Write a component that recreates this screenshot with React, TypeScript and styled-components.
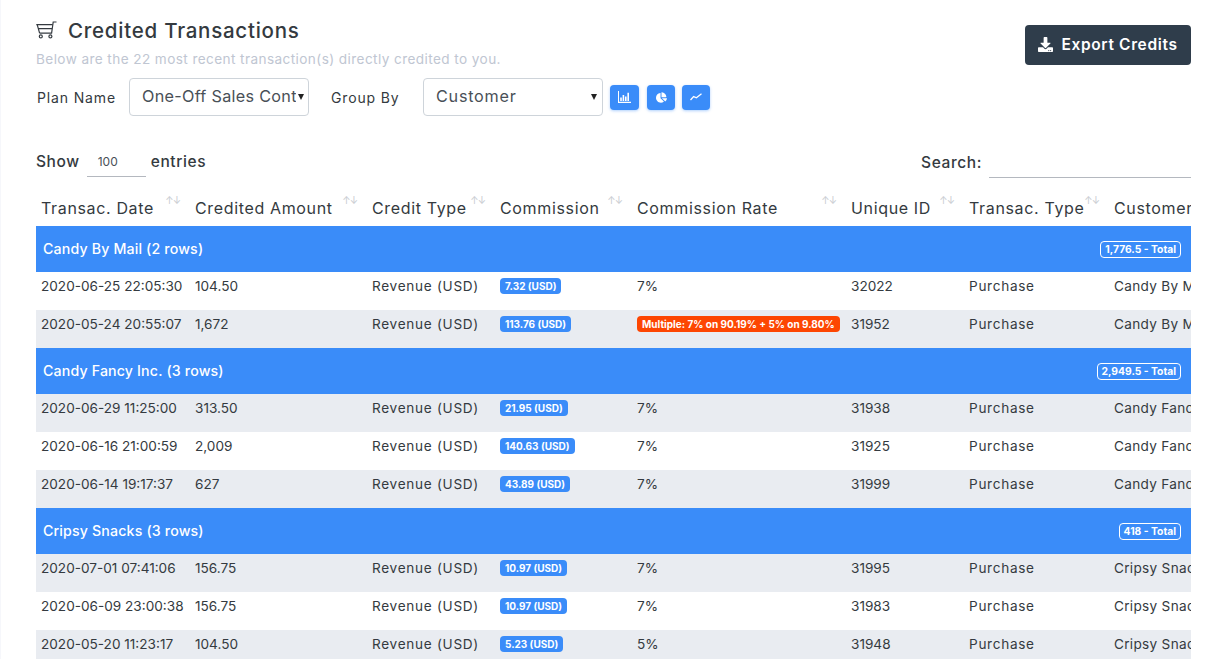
import { createGlobalStyle, styled } from 'styled-components';
import { FaChartPie, FaDownload } from 'react-icons/fa';

const FONT = `Inter, "Open Sans", "Liberation Sans", sans-serif`;

const GlobalStyle = createGlobalStyle`
  html, body {
    margin: 0;
    padding: 0;
    background: #fff;
  }
  body {
    font-family: ${FONT};
    color: #343a40;
    overflow: hidden;
  }
`;

const Page = styled.main`
  height: 659px;
  box-sizing: border-box;
  padding: 20px 23px 0 35px;
  overflow: hidden;
  border-left: 1px solid #f6f7fb;
`;

const TopRow = styled.div`
  display: flex;
  justify-content: space-between;
  align-items: flex-start;
`;

const TitleRow = styled.div`
  display: flex;
  align-items: center;
  gap: 11px;
  height: 20px;
`;

const Title = styled.h1`
  margin: 0;
  font-size: 20.5px;
  font-weight: 500;
  color: #343a40;
  letter-spacing: 0.75px;
`;

const Subtitle = styled.p`
  margin: 11px 0 0;
  font-size: 13.6px;
  line-height: 17px;
  letter-spacing: 0.41px;
  color: #c0c6d2;
`;

const ExportButton = styled.button`
  display: flex;
  align-items: center;
  justify-content: center;
  gap: 8px;
  width: 166px;
  height: 40px;
  margin-top: 5px;
  padding: 0 0 2px;
  background: #2f3d4b;
  border: 0;
  border-radius: 4px;
  color: #fff;
  font-family: ${FONT};
  font-size: 15.5px;
  font-weight: 600;
  letter-spacing: 0.65px;
`;

const FilterRow = styled.div`
  display: flex;
  align-items: center;
  height: 38px;
  margin-top: 10px;
`;

const FilterLabel = styled.label<{ $width: number; $indent: number }>`
  width: ${(p) => p.$width}px;
  padding-left: ${(p) => p.$indent}px;
  box-sizing: border-box;
  font-size: 14px;
  letter-spacing: 0.85px;
  color: #343a40;
`;

const FakeSelect = styled.div<{ $width: number; $caret: number }>`
  position: relative;
  width: ${(p) => p.$width}px;
  height: 38px;
  box-sizing: border-box;
  padding-left: 12px;
  border: 1px solid #ced4da;
  border-radius: 4px;
  font-size: 16.2px;
  letter-spacing: 0.75px;
  line-height: 34px;
  color: #495057;
  white-space: nowrap;
  overflow: hidden;

  &::after {
    content: '';
    position: absolute;
    right: ${(p) => p.$caret}px;
    top: 15px;
    border-left: 3.5px solid transparent;
    border-right: 3.5px solid transparent;
    border-top: 6px solid #222;
  }
`;

const SelectText = styled.span`
  display: block;
  width: 154px;
  overflow: hidden;
  letter-spacing: 0.3px;
`;

const IconButton = styled.button<{ $left: number; $width: number }>`
  display: flex;
  align-items: center;
  justify-content: center;
  width: ${(p) => p.$width}px;
  height: 25px;
  margin-left: ${(p) => p.$left}px;
  padding: 0;
  background: #3a8cf9;
  border: 0;
  border-radius: 4px;
  color: #fff;
  font-size: 11px;
  box-shadow: 0 1px 3px rgba(58, 140, 249, 0.4);
`;

const TableControls = styled.div`
  display: flex;
  justify-content: space-between;
  align-items: center;
  height: 28px;
  margin-top: 32px;
`;

const ControlGroup = styled.div<{ $lift?: number }>`
  display: flex;
  align-items: center;
  margin-bottom: ${(p) => p.$lift ?? 0}px;
  font-size: 15.5px;
  font-weight: 500;
  letter-spacing: 0.6px;
  color: #343a40;
`;

const EntriesInput = styled.div`
  width: 59px;
  height: 30px;
  margin: 2px 5px 0 7px;
  box-sizing: border-box;
  padding: 7px 0 0 11px;
  border-bottom: 1px solid #b4b8bf;
  font-size: 12px;
  font-weight: 400;
  letter-spacing: 0;
  line-height: 16px;
  color: #495057;
`;

const SearchInput = styled.div`
  width: 202px;
  height: 29px;
  margin: 2px 0 0 7px;
  box-sizing: border-box;
  border-bottom: 1px solid #b4b8bf;
`;

const TableClip = styled.div`
  margin-top: 14px;
  overflow: hidden;
`;

const Table = styled.table`
  width: 1300px;
  border-collapse: collapse;
  table-layout: fixed;
`;

const HeadCell = styled.th`
  position: relative;
  height: 36px;
  padding: 0 5px 1px;
  box-sizing: border-box;
  text-align: left;
  font-size: 16px;
  font-weight: 400;
  letter-spacing: 0.65px;
  white-space: nowrap;
  overflow: hidden;
  color: #343a40;

  &::after {
    content: '↑↓';
    position: absolute;
    top: 4px;
    right: 10px;
    font-size: 10px;
    letter-spacing: -1px;
    color: #c9ccd1;
  }
`;

const GroupRow = styled.tr`
  background: #3a8cf9;
  color: #fff;
`;

const GroupCell = styled.td`
  height: 46px;
  padding: 0 10px 0 7px;
  font-size: 14.2px;
  font-weight: 500;
  letter-spacing: 0.15px;
`;

const GroupInner = styled.div`
  display: flex;
  justify-content: space-between;
  align-items: center;
  width: 1138px;
`;

const GroupTitle = styled.span`
  margin-bottom: 2px;
`;

const TotalBadge = styled.span`
  padding: 1px 4px;
  border: 1px solid #fff;
  border-radius: 4px;
  font-size: 10.3px;
  font-weight: 700;
  letter-spacing: 0;
  line-height: 13px;
  white-space: nowrap;
`;

const DataRow = styled.tr<{ $shaded: boolean }>`
  background: ${(p) => (p.$shaded ? '#e9ecf1' : '#fff')};
`;

const DataCell = styled.td<{ $spacing?: number }>`
  height: 38px;
  padding: 0 5px 10px;
  box-sizing: border-box;
  font-size: 13.6px;
  letter-spacing: ${(p) => p.$spacing ?? 0}px;
  color: #343a40;
  white-space: nowrap;
  overflow: hidden;
`;

const Badge = styled.span<{ $danger?: boolean }>`
  display: inline-block;
  padding: 0 5px;
  background: ${(p) => (p.$danger ? '#fd4602' : '#3a8cf9')};
  border-radius: 4px;
  color: #fff;
  font-size: 10px;
  font-weight: 700;
  line-height: 16px;
  vertical-align: 1px;
`;

const columns = [
  { label: 'Transac. Date', width: 154 },
  { label: 'Credited Amount', width: 177 },
  { label: 'Credit Type', width: 128 },
  { label: 'Commission', width: 137 },
  { label: 'Commission Rate', width: 214 },
  { label: 'Unique ID', width: 118 },
  { label: 'Transac. Type', width: 145 },
  { label: 'Customer', width: 227 },
];

type Row = {
  date: string;
  amount: string;
  commission: string;
  rate: string;
  id: string;
  shaded: boolean;
};

const groups: { name: string; total: string; rows: Row[] }[] = [
  {
    name: 'Candy By Mail',
    total: '1,776.5 - Total',
    rows: [
      { date: '2020-06-25 22:05:30', amount: '104.50', commission: '7.32 (USD)', rate: '7%', id: '32022', shaded: false },
      { date: '2020-05-24 20:55:07', amount: '1,672', commission: '113.76 (USD)', rate: 'Multiple: 7% on 90.19% + 5% on 9.80%', id: '31952', shaded: true },
    ],
  },
  {
    name: 'Candy Fancy Inc.',
    total: '2,949.5 - Total',
    rows: [
      { date: '2020-06-29 11:25:00', amount: '313.50', commission: '21.95 (USD)', rate: '7%', id: '31938', shaded: true },
      { date: '2020-06-16 21:00:59', amount: '2,009', commission: '140.63 (USD)', rate: '7%', id: '31925', shaded: false },
      { date: '2020-06-14 19:17:37', amount: '627', commission: '43.89 (USD)', rate: '7%', id: '31999', shaded: true },
    ],
  },
  {
    name: 'Cripsy Snacks',
    total: '418 - Total',
    rows: [
      { date: '2020-07-01 07:41:06', amount: '156.75', commission: '10.97 (USD)', rate: '7%', id: '31995', shaded: true },
      { date: '2020-06-09 23:00:38', amount: '156.75', commission: '10.97 (USD)', rate: '7%', id: '31983', shaded: false },
      { date: '2020-05-20 11:23:17', amount: '104.50', commission: '5.23 (USD)', rate: '5%', id: '31948', shaded: true },
    ],
  },
];

function CartIcon() {
  return (
    <svg width="21" height="18" viewBox="0 0 21 18" fill="none" stroke="#343a40" strokeWidth="1.2">
      <path d="M20.5 1H17.2L15.6 12.2H3.6" />
      <path d="M0.3 3.6H16.6M1.2 3.6L3.6 12.2M2.2 7.6H16" />
      <circle cx="4.8" cy="15.4" r="1.5" />
      <circle cx="14.4" cy="15.4" r="1.5" />
    </svg>
  );
}

function BarsIcon() {
  return (
    <svg width="13" height="12" viewBox="0 0 13 12" fill="#fff">
      <path d="M0 0h1v10.8h12V12H0z" />
      <path d="M2.2 6.5h1.6v3.6H2.2zM4.6 4h1.6v6.1H4.6zM7 5.5h1.6v4.6H7zM9.4 1.8H11v8.3H9.4z" />
    </svg>
  );
}

function TrendIcon() {
  return (
    <svg width="12" height="8" viewBox="0 0 12 8" fill="none" stroke="#fff" strokeWidth="1.3">
      <path d="M0.5 7L3.6 3.6L6.4 4.8L11.5 0.8" />
    </svg>
  );
}

export default function App() {
  return (
    <Page>
      <GlobalStyle />
      <TopRow>
        <div>
          <TitleRow>
            <CartIcon />
            <Title>Credited Transactions</Title>
          </TitleRow>
          <Subtitle>Below are the 22 most recent transaction(s) directly credited to you.</Subtitle>
        </div>
        <ExportButton>
          <FaDownload size={15} />
          Export Credits
        </ExportButton>
      </TopRow>

      <FilterRow>
        <FilterLabel $width={93} $indent={1}>Plan Name</FilterLabel>
        <FakeSelect $width={180} $caret={4}>
          <SelectText>One-Off Sales Contest</SelectText>
        </FakeSelect>
        <FilterLabel $width={114} $indent={22}>Group By</FilterLabel>
        <FakeSelect $width={180} $caret={5}>Customer</FakeSelect>
        <IconButton $left={7} $width={29}><BarsIcon /></IconButton>
        <IconButton $left={8} $width={28}><FaChartPie /></IconButton>
        <IconButton $left={7} $width={28}><TrendIcon /></IconButton>
      </FilterRow>

      <TableControls>
        <ControlGroup $lift={2}>
          Show
          <EntriesInput>100</EntriesInput>
          entries
        </ControlGroup>
        <ControlGroup>
          Search:
          <SearchInput />
        </ControlGroup>
      </TableControls>

      <TableClip>
        <Table>
          <colgroup>
            {columns.map((c) => (
              <col key={c.label} width={c.width} />
            ))}
          </colgroup>
          <thead>
            <tr>
              {columns.map((c) => (
                <HeadCell key={c.label}>{c.label}</HeadCell>
              ))}
            </tr>
          </thead>
          <tbody>
            {groups.flatMap((g) => [
              <GroupRow key={g.name}>
                <GroupCell colSpan={8}>
                  <GroupInner>
                    <GroupTitle>{g.name} ({g.rows.length} rows)</GroupTitle>
                    <TotalBadge>{g.total}</TotalBadge>
                  </GroupInner>
                </GroupCell>
              </GroupRow>,
              ...g.rows.map((r) => (
                <DataRow key={r.id} $shaded={r.shaded}>
                  <DataCell>{r.date}</DataCell>
                  <DataCell>{r.amount}</DataCell>
                  <DataCell $spacing={0.7}>Revenue (USD)</DataCell>
                  <DataCell><Badge>{r.commission}</Badge></DataCell>
                  <DataCell>
                    {r.rate.startsWith('Multiple') ? <Badge $danger>{r.rate}</Badge> : r.rate}
                  </DataCell>
                  <DataCell>{r.id}</DataCell>
                  <DataCell $spacing={0.7}>Purchase</DataCell>
                  <DataCell $spacing={0.3}>{g.name}</DataCell>
                </DataRow>
              )),
            ])}
          </tbody>
        </Table>
      </TableClip>
    </Page>
  );
}
